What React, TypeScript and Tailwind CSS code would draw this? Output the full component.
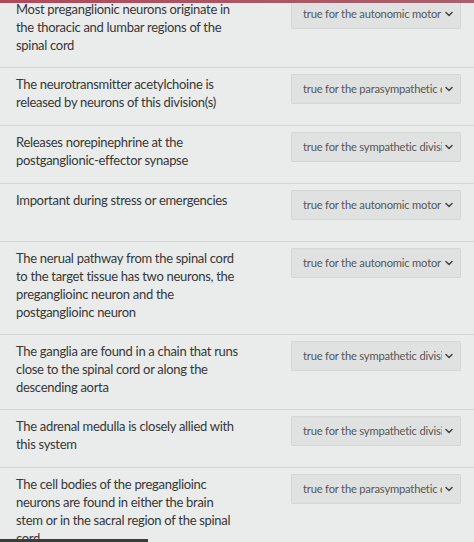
import React from "react";

const rows: { text: string; value: string }[] = [
  { text: "Most preganglionic neurons originate in the thoracic and lumbar regions of the spinal cord", value: "true for the autonomic motor" },
  { text: "The neurotransmitter acetylchoine is released by neurons of this division(s)", value: "true for the parasympathetic division" },
  { text: "Releases norepinephrine at the postganglionic-effector synapse", value: "true for the sympathetic division" },
  { text: "Important during stress or emergencies", value: "true for the autonomic motor" },
  { text: "The nerual pathway from the spinal cord to the target tissue has two neurons, the preganglioinc neuron and the postganglioinc neuron", value: "true for the autonomic motor" },
  { text: "The ganglia are found in a chain that runs close to the spinal cord or along the descending aorta", value: "true for the sympathetic division" },
  { text: "The adrenal medulla is closely allied with this system", value: "true for the sympathetic division" },
  { text: "The cell bodies of the preganglioinc neurons are found in either the brain stem or in the sacral region of the spinal cord", value: "true for the parasympathetic division" },
];

function Chevron() {
  return (
    <svg width="8" height="6" viewBox="0 0 8 6" className="shrink-0">
      <path d="M1 1.5 L4 4.5 L7 1.5" fill="none" stroke="#4a4a4a" strokeWidth="1.6" strokeLinecap="round" strokeLinejoin="round" />
    </svg>
  );
}

export default function App() {
  return (
    <div
      className="relative w-[474px] h-[542px] overflow-hidden bg-[#eaeceb]"
      style={{ fontFamily: "Lato, 'Open Sans', sans-serif" }}
    >
      <div className="-mt-[7px] flex flex-col">
        {rows.map((r, i) => (
          <div
            key={i}
            className="flex items-start justify-between pl-4 pr-[13px] pt-[7px] pb-[13px] border-b border-[#d4d6d5]"
          >
            <div className="w-[224px] text-[13px] tracking-[-0.3px] leading-[18px] text-[#363737]">{r.text}</div>
            <div className="-mt-[1px] mb-[8px] w-[170px] h-[30px] flex items-center pl-[11px] pr-[4px] bg-[#e0e2e1] border border-[#d5d7d6] rounded-[2px]">
              <div className="w-[139px] overflow-hidden whitespace-nowrap text-[11.2px] tracking-[-0.2px] text-[#555757]">{r.value}</div>
              <div className="flex-1 flex justify-center">
                <Chevron />
              </div>
            </div>
          </div>
        ))}
      </div>
      <div className="absolute top-0 left-0 w-full h-[3px] bg-gradient-to-r from-[#b04a5a] to-[#a8606c]" />
      <div className="absolute bottom-0 left-0 w-[148px] h-[3px] bg-[#3c3c3c]" />
    </div>
  );
}
